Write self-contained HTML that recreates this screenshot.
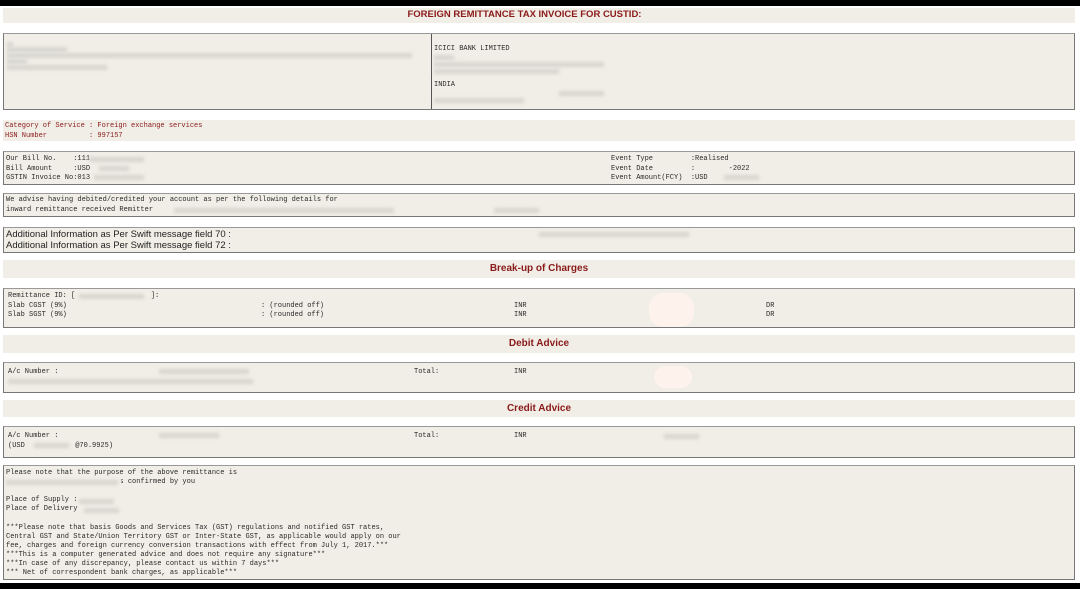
<!DOCTYPE html>
<html><head><meta charset="utf-8"><style>
*{margin:0;padding:0;box-sizing:border-box}
body{width:1080px;height:589px;background:#fff;position:relative;overflow:hidden;font-family:"Liberation Mono",monospace;font-size:7px;color:#2a2a2a}
.bk{position:absolute;left:0;width:1080px;background:#000}
.band{position:absolute;left:3px;width:1072px;background:#f0eee6}
.box{position:absolute;left:3px;width:1072px;background:#f0eee6;border:1.5px solid #777;border-top-color:#999}
.t{position:absolute;white-space:pre;line-height:9.5px}
.h{position:absolute;width:100%;text-align:center;font:bold 10px "Liberation Sans",sans-serif;color:#8b1a1a}
.bl{position:absolute;background:#d8d6d0;height:5px;filter:blur(1.5px)}
.red{color:#8b1a1a}
.sans{font-family:"Liberation Sans",sans-serif;font-size:9.5px;color:#222;line-height:11px}
</style></head><body>
<div class="bk" style="top:0;height:6px"></div>
<div class="bk" style="top:583px;height:6px"></div>

<div class="band" style="top:8px;height:15px;left:3px;width:1072px"><div class="h" style="top:1px;font-size:9.5px">FOREIGN REMITTANCE TAX INVOICE FOR CUSTID:<span style="color:#c9a0a0">&nbsp;&nbsp;&nbsp;&nbsp;&nbsp;&nbsp;&nbsp;&nbsp;&nbsp;&nbsp;&nbsp;</span></div></div>

<div class="box" style="top:33px;height:77px">
<div style="position:absolute;left:427px;top:0;bottom:0;border-left:1.5px solid #555"></div>
<div class="bl" style="left:3px;top:8px;width:6px"></div>
<div class="bl" style="left:3px;top:13px;width:60px"></div>
<div class="bl" style="left:3px;top:19px;width:405px"></div>
<div class="bl" style="left:3px;top:25px;width:20px"></div>
<div class="bl" style="left:3px;top:31px;width:100px"></div>
<div class="t" style="left:430px;top:11px">ICICI BANK LIMITED</div>
<div class="bl" style="left:430px;top:21px;width:20px"></div>
<div class="bl" style="left:430px;top:28px;width:170px"></div>
<div class="bl" style="left:430px;top:35px;width:125px"></div>
<div class="t" style="left:430px;top:47px">INDIA</div>
<div class="bl" style="left:430px;top:64px;width:90px"></div>
<div class="bl" style="left:555px;top:57px;width:45px"></div>
</div>

<div class="band" style="top:120px;height:21px"><div class="t red" style="left:2px;top:2px">Category of Service : Foreign exchange services
HSN Number          : 997157</div></div>

<div class="box" style="top:151px;height:34px">
<div class="t" style="left:2px;top:3px">Our Bill No.    :111
Bill Amount     :USD
GSTIN Invoice No:013</div>
<div class="bl" style="left:85px;top:5px;width:55px"></div>
<div class="bl" style="left:95px;top:14px;width:30px"></div>
<div class="bl" style="left:90px;top:23px;width:50px"></div>
<div class="t" style="left:607px;top:3px">Event Type         :Realised
Event Date         :        -2022
Event Amount(FCY)  :USD</div>
<div class="bl" style="left:720px;top:23px;width:35px"></div>
</div>

<div class="box" style="top:193px;height:24px">
<div class="t" style="left:2px;top:2px">We advise having debited/credited your account as per the following details for
inward remittance received Remitter</div>
<div class="bl" style="left:170px;top:14px;width:220px"></div>
<div class="bl" style="left:490px;top:14px;width:45px"></div>
</div>

<div class="box" style="top:227px;height:26px">
<div class="t sans" style="left:2px;top:1px">Additional Information as Per Swift message field 70 :
Additional Information as Per Swift message field 72 :</div>
<div class="bl" style="left:535px;top:4px;width:150px"></div>
</div>

<div class="band" style="top:260px;height:18px"><div class="h" style="top:3px">Break-up of Charges</div></div>

<div class="box" style="top:288px;height:40px">
<div class="t" style="left:4px;top:3px">Remittance ID: [                  ]:
Slab CGST (9%)
Slab SGST (9%)</div>
<div class="bl" style="left:75px;top:5px;width:65px"></div>
<div class="t" style="left:257px;top:12.5px">: (rounded off)
: (rounded off)</div>
<div class="t" style="left:510px;top:12.5px">INR
INR</div>
<div class="t" style="left:762px;top:12.5px">DR
DR</div>
<div style="position:absolute;left:645px;top:4px;width:45px;height:34px;background:#fdf3ec;border-radius:14px"></div>
</div>

<div class="band" style="top:335px;height:18px"><div class="h" style="top:3px">Debit Advice</div></div>

<div class="box" style="top:362px;height:31px">
<div class="t" style="left:4px;top:5px">A/c Number :</div>
<div class="bl" style="left:155px;top:6px;width:90px"></div>
<div class="bl" style="left:4px;top:16px;width:245px"></div>
<div class="t" style="left:410px;top:5px">Total:</div>
<div class="t" style="left:510px;top:5px">INR</div>
<div style="position:absolute;left:650px;top:3px;width:38px;height:22px;background:#fdf3ec;border-radius:11px"></div>
</div>

<div class="band" style="top:400px;height:17px"><div class="h" style="top:3px">Credit Advice</div></div>

<div class="box" style="top:426px;height:32px">
<div class="t" style="left:4px;top:5px">A/c Number :
(USD            @70.9925)</div>
<div class="bl" style="left:155px;top:6px;width:60px"></div>
<div class="bl" style="left:30px;top:16px;width:35px"></div>
<div class="t" style="left:410px;top:5px">Total:</div>
<div class="t" style="left:510px;top:5px">INR</div>
<div class="bl" style="left:660px;top:7px;width:35px"></div>
</div>

<div class="box" style="top:465px;height:115px">
<div class="t" style="left:2px;top:3px;line-height:9.1px">Please note that the purpose of the above remittance is
                a         as confirmed by you

Place of Supply :
Place of Delivery

***Please note that basis Goods and Services Tax (GST) regulations and notified GST rates,
Central GST and State/Union Territory GST or Inter-State GST, as applicable would apply on our
fee, charges and foreign currency conversion transactions with effect from July 1, 2017.***
***This is a computer generated advice and does not require any signature***
***In case of any discrepancy, please contact us within 7 days***
*** Net of correspondent bank charges, as applicable***</div>
<div style="position:absolute;left:2px;top:12px;width:115px;height:9px;background:#f0eee6"></div>
<div class="bl" style="left:2px;top:14px;width:112px"></div>
<div class="bl" style="left:75px;top:33px;width:35px"></div>
<div class="bl" style="left:80px;top:42px;width:35px"></div>
</div>
</body></html>
